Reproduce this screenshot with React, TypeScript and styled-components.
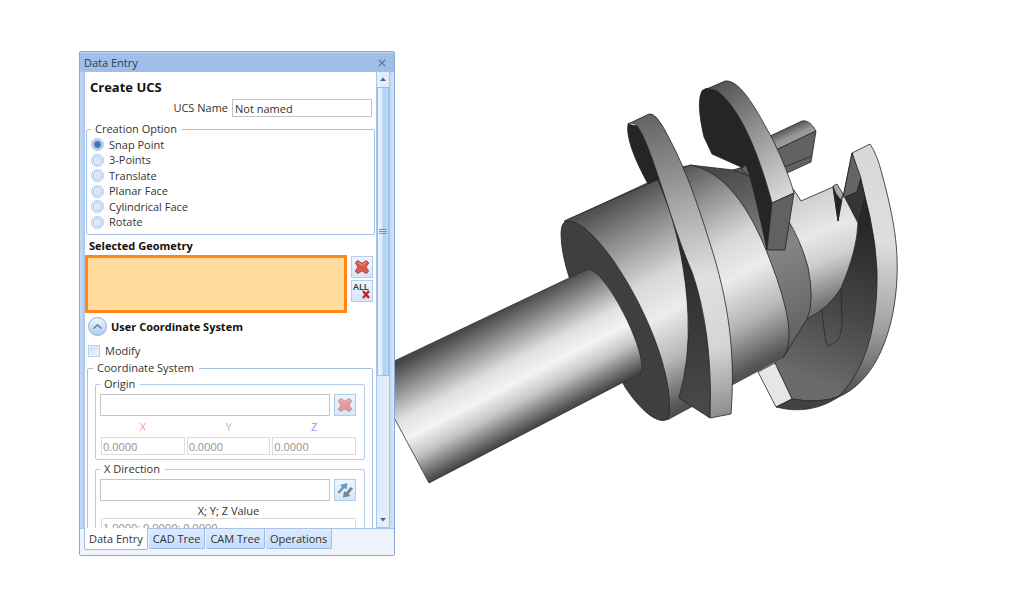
import React, { useState } from "react";
import styled, { createGlobalStyle } from "styled-components";

const GlobalStyle = createGlobalStyle`
  *, *::before, *::after { box-sizing: border-box; }
  body { margin: 0; background: #fff; }
  body, button, input { font-family: "Open Sans", "Noto Sans", sans-serif; font-size: 11px; color: #333; }
  button, input, fieldset, legend { margin: 0; padding: 0; }
`;

const Workspace = styled.main`
  display: flex;
  align-items: flex-start;
  min-height: 100vh;
  overflow: hidden;
`;

const Dock = styled.section`
  flex: 0 0 316px;
  margin: 51px 0 0 79px;
  border: 1px solid #86a8d8;
  border-radius: 2px;
  background: #a9c6ee;
  line-height: 14px;
`;

const TitleBar = styled.header`
  display: flex;
  align-items: center;
  justify-content: space-between;
  height: 20px;
  padding: 0 8px 0 4px;
  border-top: 1px solid #c5d9f3;
  background: #9fbfe9;
`;

const Title = styled.h1`
  margin: 0;
  font-size: 11px;
  font-weight: 400;
  color: #2b3c55;
`;

const CloseButton = styled.button`
  display: flex;
  border: 0;
  background: none;
`;

const Body = styled.div`
  display: flex;
  height: calc(100vh - 145px);
  padding: 0 4px 0 5px;
  background: linear-gradient(90deg, #c6daf4, #aac7ef 5px, #b4cdf0 98%, #d9e7fa);
`;

const Content = styled.form`
  flex: 1;
  min-width: 0;
  overflow: hidden;
  padding: 7px 1px 0 0;
  background: #fff;
`;

const Heading = styled.h2`
  margin: 0 0 4px 5px;
  font-size: 13px;
  line-height: 16px;
  color: #111;
`;

const NameRow = styled.div`
  display: flex;
  align-items: center;
  justify-content: flex-end;
  gap: 4px;
  margin: 0 3px 5px 0;
`;

const TextBox = styled.input<{ $tall?: boolean }>`
  flex: 1;
  min-width: 0;
  height: ${(p) => (p.$tall ? 22 : 18)}px;
  padding: 0 1px;
  border: 1px solid ${(p) => (p.disabled ? "#dcdcdc" : "#c3c3c8")};
  background: #fff;
  color: ${(p) => (p.disabled ? "#929292" : "#333")};
  outline: 0;
`;

const NameBox = styled(TextBox)`
  flex: 0 0 140px;
  padding: 0 2px;
`;

const Group = styled.fieldset<{ $inner?: boolean }>`
  min-width: 0;
  border: 1px solid ${(p) => (p.$inner ? "#b5cbea" : "#a6c0e5")};
  border-radius: 2px;
`;

const Legend = styled.legend`
  padding: 0 5px 0 4px;
  line-height: 14px;
`;

const OptionGroup = styled(Group)`
  margin: 0 0 0 1px;
  > legend { margin-left: 4px; }
`;

const OptionList = styled.div`
  display: grid;
  grid-template-rows: repeat(6, 1fr);
  height: 98px;
  padding: 1px 0 4px 4px;
`;

const OptionLabel = styled.label`
  display: flex;
  align-items: center;
  gap: 5px;
`;

const Radio = styled.input`
  appearance: none;
  width: 13px;
  height: 13px;
  border: 1px solid #a9c5e8;
  border-radius: 50%;
  background: radial-gradient(circle, #d7e6fa 0 2px, #edf5fe 3px, #a9c6ec 4px, #edf4fd 5px);
  &:checked {
    background: radial-gradient(circle, #3f74b8 0 2px, #5e90cb 3px, #cfe1f7 5px);
  }
`;

const Subheading = styled.h3`
  margin: 0;
  font-size: 11px;
  line-height: 14px;
  color: #111;
`;

const GeometrySection = styled.section`
  padding: 4px 0 0 4px;
`;

const GeometryRow = styled.div`
  display: flex;
  gap: 4px;
  margin: 2px 0 0 -4px;
`;

const GeometryList = styled.div`
  flex: 0 0 262px;
  height: 58px;
  border: 3px solid #ff8619;
  background: #ffdb9c;
`;

const ButtonColumn = styled.div`
  display: flex;
  flex-direction: column;
  gap: 2px;
  padding-top: 1px;
`;

const IconButton = styled.button<{ $dim?: boolean }>`
  display: flex;
  align-items: center;
  justify-content: center;
  flex: none;
  width: 22px;
  height: 22px;
  border: 1px solid #b3cceb;
  background: linear-gradient(#edf5fe, #d5e6fa);
  svg { opacity: ${(p) => (p.$dim ? 0.55 : 1)}; }
`;

const ExpanderRow = styled.div`
  display: flex;
  align-items: center;
  gap: 4px;
  height: 27px;
  padding-left: 3px;
`;

const ExpanderButton = styled.button`
  display: flex;
  align-items: center;
  justify-content: center;
  width: 19px;
  height: 19px;
  border: 1px solid #8fb2de;
  border-radius: 50%;
  background: linear-gradient(#f0f6fe, #abcaf3);
`;

const CheckLabel = styled.label`
  display: flex;
  align-items: center;
  gap: 5px;
  height: 21px;
  padding-left: 3px;
`;

const Checkbox = styled.input`
  appearance: none;
  width: 12px;
  height: 12px;
  border: 1px solid #b8cfec;
  background: linear-gradient(135deg, #c3d8f4, #f3f8fe);
  box-shadow: inset 0 0 0 1px #e9f2fd;
  &:checked { background: #5e90cb; }
`;

const CoordinateGroup = styled(Group)`
  margin: 0 2px;
  padding: 2px 7px;
  > legend { margin-left: -2px; }
`;

const InnerGroup = styled(Group)`
  margin-bottom: 2px;
  padding: 3px 8px 4px 4px;
`;

const PickRow = styled.div`
  display: flex;
  gap: 4px;
`;

const AxisGrid = styled.div`
  display: grid;
  grid-template-columns: repeat(3, 1fr);
  gap: 2px;
  padding: 4px 0 0 1px;
`;

const AxisLabel = styled.label<{ $color: string }>`
  display: flex;
  flex-direction: column;
  align-items: stretch;
  gap: 3px;
  text-align: center;
  color: ${(p) => p.$color};
  input { flex: none; width: 100%; }
`;

const ValueLabel = styled(AxisLabel)`
  gap: 0;
  padding: 3px 0 0 1px;
`;

const ScrollBar = styled.div`
  display: flex;
  flex-direction: column;
  flex: 0 0 14px;
  border: 1px solid #a9c4ea;
  border-top: 0;
  background: #e0ecfb;
`;

const ScrollButton = styled.button`
  display: flex;
  align-items: center;
  justify-content: center;
  flex: 0 0 15px;
  border: 0;
  background: #e3eefb;
`;

const ScrollTrack = styled.div`
  flex: 1;
`;

const ScrollThumb = styled.div`
  display: flex;
  align-items: center;
  justify-content: center;
  height: 68%;
  border: 1px solid #9dbde8;
  background: linear-gradient(90deg, #e5f2ff 20%, #cee4fd 50%, #a9cff7 55%, #c4ddfa);
`;

const TabBar = styled.nav`
  display: flex;
  align-items: flex-start;
  gap: 1px;
  height: 27px;
  padding-left: 4px;
  border-top: 1px solid #a9c4ea;
  background: #eef3fc;
`;

const Tab = styled.button<{ $active: boolean }>`
  height: ${(p) => (p.$active ? 22 : 20)}px;
  margin-top: ${(p) => (p.$active ? -1 : 0)}px;
  padding: 0 4px;
  border: 1px solid #9dbbe4;
  border-top: 0;
  border-left-width: ${(p) => (p.$active ? 1 : 0)}px;
  border-radius: 0 0 2px 2px;
  background: ${(p) => (p.$active ? "#fff" : "linear-gradient(#dceafc, #c6defa)")};
  white-space: nowrap;
`;

const Viewport = styled.svg`
  flex: 1;
  min-width: 0;
  height: auto;
`;

const RedCross = () => (
  <svg width="16" height="16" viewBox="0 0 16 16" aria-hidden="true">
    <path d="M3.7 1.5 8 4.3l4.3-2.8 2.4 2.4L12 8l2.7 4.2-2.5 2.4L8 11.9l-4.3 2.7-2.4-2.4L4 8 1.3 3.9z" fill="#dd5a50" stroke="#b5484a" strokeLinejoin="round" />
    <path d="m3.8 3.3 4.2 3 4.3-3" fill="none" stroke="#f19782" />
  </svg>
);

const ClearAll = () => (
  <svg width="20" height="20" viewBox="0 0 20 20" aria-hidden="true">
    <text x="1" y="9" fontFamily="Open Sans, sans-serif" fontSize="9" fontWeight="600" fill="#333">ALL</text>
    <path d="m11 10 6 7m0-7-6 7" stroke="#c71f2c" strokeWidth="2.5" />
  </svg>
);

const FlipArrows = () => (
  <svg width="18" height="18" viewBox="0 0 18 18" aria-hidden="true">
    <path d="M1 11.5 6 6 4 4l7.5-2L10.5 8.5 8.5 7 3.5 12.5z" fill="#6a9ac4" />
    <path d="M17 7.5 12.500 13l2 2L7 16.500 8 10l2 1.500L14.500 6z" fill="#7c848e" />
  </svg>
);

const Arrow = ({ down }: { down?: boolean }) => (
  <svg width="8" height="5" viewBox="0 0 8 5" aria-hidden="true">
    <path d={down ? "M1 1h6L4 4.5z" : "M1 4h6L4 .5z"} fill="#3f67a5" />
  </svg>
);

const PartModel = () => (
  <Viewport viewBox="395 0 629 601" preserveAspectRatio="xMinYMin meet" role="img" aria-label="Shaft with helical flanges">
    <defs>
      <linearGradient id="shaft" gradientUnits="userSpaceOnUse" x1="500" y1="311" x2="556" y2="419">
        <stop offset="0" stopColor="#484848" /><stop offset=".18" stopColor="#898989" />
        <stop offset=".42" stopColor="#e0e0e0" /><stop offset=".58" stopColor="#f4f4f4" />
        <stop offset=".74" stopColor="#c5c5c5" /><stop offset=".9" stopColor="#6f6f6f" /><stop offset="1" stopColor="#3b3b3b" />
      </linearGradient>
      <linearGradient id="body" gradientUnits="userSpaceOnUse" x1="640" y1="187" x2="742" y2="384">
        <stop offset="0" stopColor="#505050" /><stop offset=".15" stopColor="#858585" />
        <stop offset=".4" stopColor="#d8d8d8" /><stop offset=".56" stopColor="#ececec" />
        <stop offset=".76" stopColor="#b5b5b5" /><stop offset=".95" stopColor="#585858" /><stop offset="1" stopColor="#484848" />
      </linearGradient>
      <linearGradient id="hub" gradientUnits="userSpaceOnUse" x1="805" y1="197" x2="844" y2="300">
        <stop offset="0" stopColor="#cfcfcf" /><stop offset=".35" stopColor="#e8e8e8" />
        <stop offset=".6" stopColor="#cfcfcf" /><stop offset="1" stopColor="#6e6e6e" />
      </linearGradient>
      <linearGradient id="ring" gradientUnits="userSpaceOnUse" x1="720" y1="170" x2="800" y2="340">
        <stop offset="0" stopColor="#494949" /><stop offset=".5" stopColor="#858585" /><stop offset="1" stopColor="#626262" />
      </linearGradient>
      <linearGradient id="bandA" gradientUnits="userSpaceOnUse" x1="640" y1="115" x2="722" y2="418">
        <stop offset="0" stopColor="#626262" /><stop offset=".2" stopColor="#8d8d8d" />
        <stop offset=".55" stopColor="#e0e0e0" /><stop offset=".78" stopColor="#d5d5d5" /><stop offset="1" stopColor="#8b8b8b" />
      </linearGradient>
      <linearGradient id="faceA" gradientUnits="userSpaceOnUse" x1="670" y1="220" x2="700" y2="410">
        <stop offset="0" stopColor="#242424" /><stop offset="1" stopColor="#494949" />
      </linearGradient>
      <linearGradient id="bandB" gradientUnits="userSpaceOnUse" x1="715" y1="82" x2="782" y2="200">
        <stop offset="0" stopColor="#505050" /><stop offset=".5" stopColor="#989898" /><stop offset="1" stopColor="#dcdcdc" />
      </linearGradient>
      <linearGradient id="bandC" gradientUnits="userSpaceOnUse" x1="870" y1="155" x2="850" y2="400">
        <stop offset="0" stopColor="#d8d8d8" /><stop offset=".35" stopColor="#dedede" />
        <stop offset=".7" stopColor="#a0a0a0" /><stop offset="1" stopColor="#494949" />
      </linearGradient>
      <linearGradient id="faceC" gradientUnits="userSpaceOnUse" x1="868" y1="230" x2="812" y2="380">
        <stop offset="0" stopColor="#282828" /><stop offset=".55" stopColor="#484848" /><stop offset="1" stopColor="#6a6a6a" />
      </linearGradient>
      <linearGradient id="stub" gradientUnits="userSpaceOnUse" x1="784" y1="127" x2="792" y2="145">
        <stop offset="0" stopColor="#4b4b4b" /><stop offset=".6" stopColor="#979797" /><stop offset="1" stopColor="#9e9e9e" />
      </linearGradient>
    </defs>
    <g stroke="#242424" strokeWidth=".8" strokeLinejoin="round">
      {/* key stub behind the middle flange */}
      <path d="M768 137 802 121Q809 119 816 131L776 150z" fill="url(#stub)" />
      <path d="M776 150 816 131 811 162 785 174z" fill="#626262" />
      <path d="M784 167 812 156" fill="none" />

      {/* end flange */}
      <path d="M852 153 870 144Q877 154 882 174C895 222 898 248 897 277C895 330 876 383 836 398L820 400C860 370 870 312 870 270z" fill="url(#bandC)" />
      <path d="M852 153Q875 220 877 270C878 318 869 367 838 397Q820 404 792 399L775 363 807 319 845 240 858 222 843 197z" fill="url(#faceC)" />
      <path d="M852 153 843 198 857 192 861 178z" fill="#656565" />
      <path d="M843 198 857 192 861 179 865 197 858 224z" fill="#353535" />
      <path d="M758 372 775 363 792 399 776 407z" fill="#e6e6e6" />
      <path d="M776 407 792 399Q820 404 840 396Q811 416 776 407z" fill="#414141" />
      <path d="M822 310Q824 334 827 346 842 343 842 322L841 288" fill="none" strokeDasharray="8 1" />

      {/* hub */}
      <path d="M786 186 794 190 801 201 833 187 838 221 841 200 844 196 858 223Q857 251 841 288 829 308 807 319L785 300z" fill="url(#hub)" />
      <path d="M833 187 838 221 842 200 837 192z" fill="#252525" />
      <path d="M833 186 837 184 843 194 841 200Q835 194 833 186z" fill="#aaa" />

      {/* body and its chamfer */}
      <path d="M690 165 733 170 752 176Q794 215 808 267 815 302 807 319L789 348 783 358 765 250z" fill="url(#ring)" />
      <path d="M733 170 750 165 752 177z" fill="#565656" />
      <path d="M564 221 683 166 690 165C724 171 750 207 770 260Q800 337 783 358L668 420z" fill="url(#body)" stroke="none" />
      <path d="M564 221 648 184M684 168 690 165C724 171 750 207 770 260Q800 337 783 358" fill="none" />
      <path d="M561 234Q561 221 568 221C594 222 637 290 656 343C668 375 672 405 668 419 657 426 638 407 625 387L570 280Q561 253 561 234z" fill="#3f3f3f" />

      {/* shaft */}
      <path d="M390 363 586 270C602 262 649 353 641 373L429 483 390 410z" fill="url(#shaft)" stroke="#303030" />

      {/* first flange */}
      <path d="M628 124Q625 142 648 184L664 177 645 128z" fill="#252525" />
      <path d="M657 177C677 223 686 272 688 315Q690 359 679 398L710 418 711 360 696 280z" fill="url(#faceA)" />
      <path d="M628 124 649 114Q656 112 668 136C687 171 700 211 713 253C731 312 735 363 731 414L710 418C712 366 707 315 692 272C670 222 652 145 637 126Q632 121 628 124z" fill="url(#bandA)" />

      {/* middle flange */}
      <path d="M702 91C697 100 700 120 704 137L712 154 741 167 750 177Q758 207 767 250L772 203Q750 121 722 94 709 84 702 91z" fill="#252525" />
      <path d="M741 169 746 165 750 177z" fill="#666" />
      <path d="M702 91 725 81C741 79 758 113 773 140Q788 171 794 193L772 203C758 150 739 107 717 91Q708 87 702 91z" fill="url(#bandB)" />
      <path d="M772 203 794 193 785 250 767 250z" fill="#616161" />
    </g>
  </Viewport>
);

const creationOptions = ["Snap Point", "3-Points", "Translate", "Planar Face", "Cylindrical Face", "Rotate"];
const tabs = ["Data Entry", "CAD Tree", "CAM Tree", "Operations"];
const axes = [
  { name: "X", color: "#ff9c9c" },
  { name: "Y", color: "#a4d3a4" },
  { name: "Z", color: "#9696ff" },
];

export default function App() {
  const [option, setOption] = useState(creationOptions[0]);
  const [tab, setTab] = useState(tabs[0]);
  return (
    <>
      <GlobalStyle />
      <Workspace>
        <Dock aria-label="Data Entry">
          <TitleBar>
            <Title>Data Entry</Title>
            <CloseButton aria-label="Close">
              <svg width="8" height="8" viewBox="0 0 9 9" aria-hidden="true">
                <path d="m1 1 7 7m0-7L1 8" stroke="#5377ab" strokeWidth="1.5" />
              </svg>
            </CloseButton>
          </TitleBar>
          <Body>
            <Content onSubmit={(e) => e.preventDefault()}>
              <Heading>Create UCS</Heading>
              <NameRow>
                <label htmlFor="ucs-name">UCS Name</label>
                <NameBox id="ucs-name" defaultValue="Not named" />
              </NameRow>
              <OptionGroup>
                <Legend>Creation Option</Legend>
                <OptionList>
                  {creationOptions.map((o) => (
                    <OptionLabel key={o}>
                      <Radio type="radio" name="creation" checked={o === option} onChange={() => setOption(o)} />
                      {o}
                    </OptionLabel>
                  ))}
                </OptionList>
              </OptionGroup>
              <GeometrySection>
                <Subheading>Selected Geometry</Subheading>
                <GeometryRow>
                  <GeometryList />
                  <ButtonColumn>
                    <IconButton type="button" aria-label="Remove selected"><RedCross /></IconButton>
                    <IconButton type="button" aria-label="Remove all"><ClearAll /></IconButton>
                  </ButtonColumn>
                </GeometryRow>
              </GeometrySection>
              <ExpanderRow>
                <ExpanderButton type="button" aria-label="Collapse">
                  <svg width="11" height="7" viewBox="0 0 11 7" aria-hidden="true">
                    <path d="M1.5 5.5 5.5 2l4 3.5" fill="none" stroke="#5c7ca6" strokeWidth="1.5" />
                  </svg>
                </ExpanderButton>
                <Subheading>User Coordinate System</Subheading>
              </ExpanderRow>
              <CheckLabel>
                <Checkbox type="checkbox" />
                Modify
              </CheckLabel>
              <CoordinateGroup>
                <Legend>Coordinate System</Legend>
                <InnerGroup $inner>
                  <Legend>Origin</Legend>
                  <PickRow>
                    <TextBox $tall aria-label="Origin" />
                    <IconButton type="button" $dim aria-label="Clear origin"><RedCross /></IconButton>
                  </PickRow>
                  <AxisGrid>
                    {axes.map((a) => (
                      <AxisLabel key={a.name} $color={a.color}>
                        {a.name}
                        <TextBox disabled defaultValue="0.0000" />
                      </AxisLabel>
                    ))}
                  </AxisGrid>
                </InnerGroup>
                <InnerGroup $inner>
                  <Legend>X Direction</Legend>
                  <PickRow>
                    <TextBox $tall aria-label="X Direction" />
                    <IconButton type="button" aria-label="Flip direction"><FlipArrows /></IconButton>
                  </PickRow>
                  <ValueLabel $color="#333">
                    X; Y; Z Value
                    <TextBox disabled defaultValue="1.0000; 0.0000; 0.0000" />
                  </ValueLabel>
                </InnerGroup>
              </CoordinateGroup>
            </Content>
            <ScrollBar>
              <ScrollButton type="button" aria-label="Scroll up"><Arrow /></ScrollButton>
              <ScrollTrack>
                <ScrollThumb>
                  <svg width="8" height="6" viewBox="0 0 8 6" aria-hidden="true">
                    <path d="M0 .5h8M0 2.5h8M0 4.5h8" stroke="#7695bd" />
                  </svg>
                </ScrollThumb>
              </ScrollTrack>
              <ScrollButton type="button" aria-label="Scroll down"><Arrow down /></ScrollButton>
            </ScrollBar>
          </Body>
          <TabBar>
            {tabs.map((t) => (
              <Tab key={t} $active={t === tab} onClick={() => setTab(t)}>{t}</Tab>
            ))}
          </TabBar>
        </Dock>
        <PartModel />
      </Workspace>
    </>
  );
}
